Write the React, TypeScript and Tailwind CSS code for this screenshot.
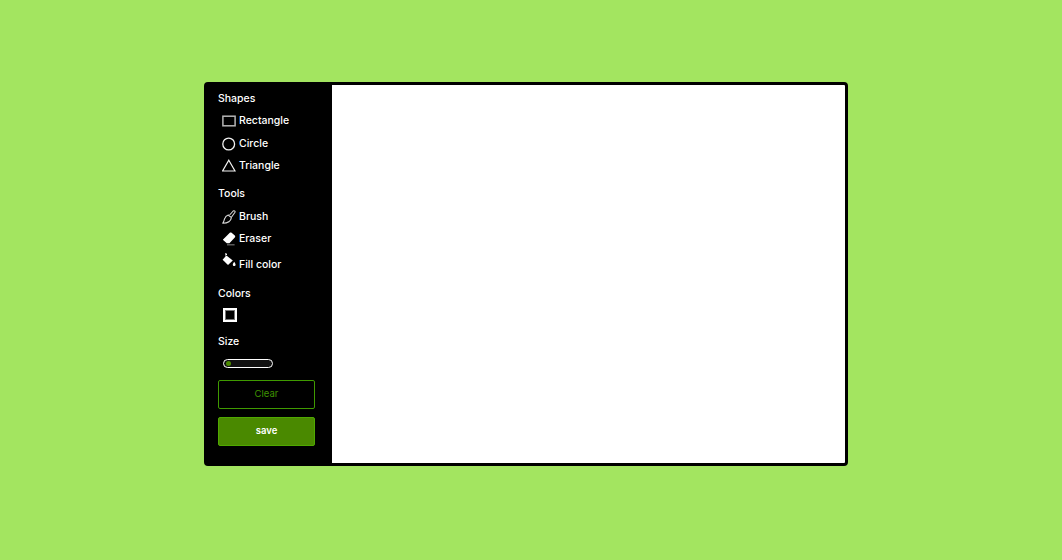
const font = "font-['Inter','Liberation_Sans',sans-serif]"

function RectIcon() {
	return (
		<svg width="14" height="12" viewBox="0 0 14 12" fill="none" stroke="#b5b5b5" strokeWidth="1.5">
			<rect x="0.9" y="1.2" width="12.2" height="9.6" />
		</svg>
	)
}

function CircleIcon() {
	return (
		<svg width="14" height="14" viewBox="0 0 14 14" fill="none" stroke="#f2f2f2" strokeWidth="1.3">
			<circle cx="6.7" cy="7" r="5.9" />
		</svg>
	)
}

function TriangleIcon() {
	return (
		<svg className="-translate-y-[1px]" width="14" height="13" viewBox="0 0 14 13" fill="none" stroke="#f2f2f2" strokeWidth="1.2">
			<path d="M6.8 1.2 L13 12 L0.6 12 Z" />
		</svg>
	)
}

function BrushIcon() {
	return (
		<svg width="14" height="14" viewBox="0 0 14 14" fill="none" stroke="#d9d9d9" strokeWidth="1.1" strokeLinejoin="round">
			<path d="M7.6 5 L11.2 1 C12 0.3 13.4 1 13 2.2 L9.4 7.2" />
			<path d="M6.2 5 L9.4 7.6 C9 10.4 6.4 13.2 0.8 13.2 C2 11.6 2 10.4 2.6 8.8 C3.2 7 4.6 5.6 6.2 5 Z" />
		</svg>
	)
}

function EraserIcon() {
	return (
		<svg width="14" height="14" viewBox="0 0 14 14" fill="white">
			<path d="M7.8 0.8 C8.4 0.3 9 0.3 9.6 0.8 L12.8 3.6 C13.4 4.2 13.4 4.8 12.8 5.4 L7.4 11.2 L4.8 11.2 L0.8 7.8 Z" />
			<path d="M5 12.4 H12.6 V13.2 H5 Z" opacity="0.7" />
		</svg>
	)
}

function FillIcon() {
	return (
		<svg width="14" height="14" viewBox="0 0 14 14" fill="white">
			<path d="M3 0.8 C3.6 0 4.8 0.2 5 1.2 L5 2 L4 2 L3.8 1.4 L3.4 1.8 L4.4 3.4 L3.6 3.6 Z" />
			<path d="M4.4 2.6 L10.8 7.6 L6 12 L0.6 6.8 Z" />
			<path d="M12.2 8.8 C12.8 10 13.6 10.8 13.6 11.8 C13.6 13.5 10.8 13.5 10.8 11.8 C10.8 10.8 11.6 10 12.2 8.8 Z" />
		</svg>
	)
}

function Heading({ label, className }: { label: string; className: string }) {
	return <div className={`h-5 text-[10.5px] leading-5 font-medium text-white ${className}`}>{label}</div>
}

function Option({ icon, label, className }: { icon: React.ReactNode; label: string; className: string }) {
	return (
		<div className={`flex h-5 items-center pl-[4px] text-[10.5px] font-medium text-white ${className}`}>
			<span className="flex w-[17px] justify-start">{icon}</span>
			<span>{label}</span>
		</div>
	)
}

export default function App() {
	return (
		<div className={`flex h-[560px] w-full items-center justify-center bg-[#a3e560] pb-[12px] pr-[10px] ${font}`}>
			<div className="flex h-[384px] w-[644px] overflow-hidden rounded border-[3px] border-black bg-black">
				<aside className="flex w-[125px] shrink-0 flex-col pl-[11px] pt-[4px]">
					<Heading label="Shapes" className="mt-[0px]" />
					<Option icon={<RectIcon />} label="Rectangle" className="mt-[2px]" />
					<Option icon={<CircleIcon />} label="Circle" className="mt-[3px]" />
					<Option icon={<TriangleIcon />} label="Triangle" className="mt-[2px]" />
					<Heading label="Tools" className="mt-[8px]" />
					<Option icon={<BrushIcon />} label="Brush" className="mt-[3px]" />
					<Option icon={<EraserIcon />} label="Eraser" className="mt-[2px]" />
					<div className="mt-[6px] flex h-5 pl-[4px] text-[10.5px] font-medium leading-5 text-white">
						<span className="w-[17px] -translate-y-[2px]"><FillIcon /></span>
						<span>Fill color</span>
					</div>
					<Heading label="Colors" className="mt-[9px]" />
					<div className="ml-[5px] mt-[4px] h-[14px] w-[14px] bg-white p-[2px]">
						<div className="h-full w-full border border-[#777] bg-black" />
					</div>
					<Heading label="Size" className="mt-[10px]" />
					<div className="ml-[5px] mt-[7px] flex h-[9px] w-[50px] items-center rounded-full border border-white bg-[#111] pl-[2px]">
						<div className="h-[5px] w-[5px] rounded-full bg-[#4a8a00]" />
					</div>
					<button className="mt-[12px] h-[29px] w-[97px] rounded-[2px] border border-[#3f9a00] bg-black text-[9.5px] text-[#3f9300]">
						Clear
					</button>
					<button className="mt-[8px] h-[29px] w-[97px] rounded-[2px] border border-[#4fa800] bg-[#4a8900] text-[9.5px] font-semibold text-white">
						save
					</button>
				</aside>
				<main className="h-full flex-1 bg-white" />
			</div>
		</div>
	)
}
